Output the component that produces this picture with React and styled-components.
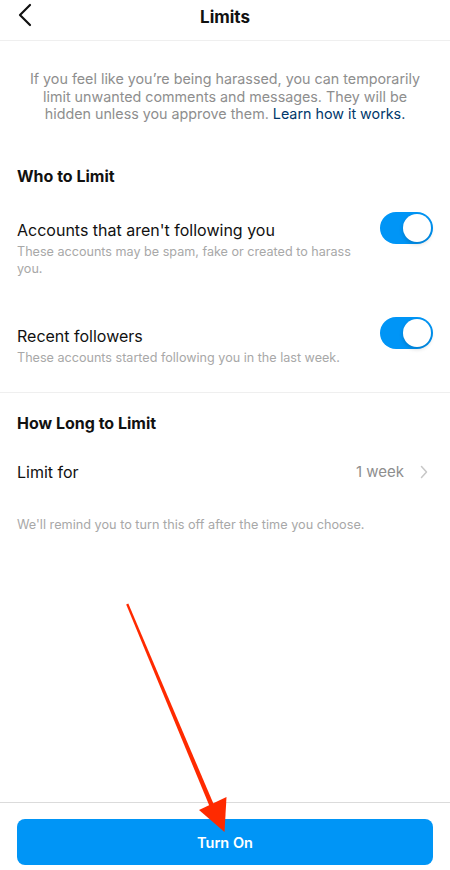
import React, { useState } from 'react';
import styled, { createGlobalStyle } from 'styled-components';

const GlobalStyle = createGlobalStyle`
  html, body {
    margin: 0;
    padding: 0;
    background: #fff;
  }
  body {
    font-family: Inter, "Noto Sans", "Liberation Sans", sans-serif;
    color: #262626;
    -webkit-font-smoothing: antialiased;
  }
`;

const Page = styled.div`
  position: relative;
  width: 450px;
  height: 870px;
  display: flex;
  flex-direction: column;
  overflow: hidden;
`;

const Header = styled.header`
  height: 40px;
  display: flex;
  align-items: center;
  justify-content: center;
  position: relative;
  border-bottom: 1px solid #efefef;
`;

const BackButton = styled.button`
  position: absolute;
  left: 12px;
  top: 2px;
  width: 26px;
  height: 26px;
  padding: 0;
  border: none;
  background: none;
  display: flex;
  align-items: center;
  justify-content: center;
`;

const Title = styled.h1`
  margin: 0;
  margin-top: -6px;
  font-size: 17px;
  font-weight: 700;
  color: #111;
`;

const Intro = styled.p`
  margin: 29px 20px 0;
  text-align: center;
  font-size: 14.3px;
  line-height: 17.5px;
  color: #8e8e8e;
`;

const LearnLink = styled.a`
  color: #00376b;
  text-decoration: none;
`;

const SectionTitle = styled.h2`
  margin: ${({ $top }) => $top}px 17px 0;
  font-size: 16px;
  font-weight: 700;
  color: #111;
`;

const Row = styled.div`
  display: flex;
  align-items: flex-start;
  justify-content: space-between;
  gap: 20px;
  margin: ${({ $top }) => $top}px 17px 0;
`;

const RowText = styled.div`
  flex: 1;
  padding-top: ${({ $pad }) => $pad || 0}px;
`;

const RowLabel = styled.div`
  font-size: 16px;
  line-height: 20px;
  color: #111;
`;

const RowHint = styled.div`
  margin-top: 3px;
  font-size: 12.6px;
  line-height: 17px;
  color: #a8a8a8;
`;

const Toggle = styled.button`
  flex: none;
  position: relative;
  width: 53px;
  height: 32px;
  padding: 0;
  border: none;
  border-radius: 16px;
  background: ${({ $on }) => ($on ? '#0095f6' : '#e5e5ea')};
  cursor: pointer;
`;

const Knob = styled.span`
  position: absolute;
  top: 2px;
  left: ${({ $on }) => ($on ? '23px' : '2px')};
  width: 28px;
  height: 28px;
  border-radius: 50%;
  background: #fff;
  box-shadow: 0 2px 4px rgba(0, 0, 0, 0.18);
`;

const Divider = styled.div`
  margin-top: ${({ $top }) => $top}px;
  height: 1px;
  background: #efefef;
`;

const PickerRow = styled.div`
  display: flex;
  align-items: center;
  justify-content: space-between;
  margin: 28px 22px 0 17px;
  height: 22px;
`;

const PickerValue = styled.div`
  display: flex;
  align-items: center;
  gap: 16px;
  font-size: 15px;
  color: #8e8e8e;
`;

const Note = styled.p`
  margin: 33px 17px 0;
  font-size: 12.7px;
  line-height: 17px;
  color: #a8a8a8;
`;

const Spacer = styled.div`
  flex: 1;
`;

const Footer = styled.footer`
  border-top: 1px solid #dbdbdb;
  padding: 16px 17px 5px;
`;

const PrimaryButton = styled.button`
  width: 100%;
  height: 46px;
  border: none;
  border-radius: 8px;
  background: #0095f6;
  color: #fff;
  font-family: inherit;
  font-size: 14.5px;
  font-weight: 600;
  cursor: pointer;
`;

const Annotation = styled.svg`
  position: absolute;
  left: 0;
  top: 0;
  pointer-events: none;
`;

function Switch({ on, onChange }) {
  return (
    <Toggle $on={on} onClick={() => onChange(!on)}>
      <Knob $on={on} />
    </Toggle>
  );
}

export default function App() {
  const [nonFollowers, setNonFollowers] = useState(true);
  const [recent, setRecent] = useState(true);

  return (
    <Page>
      <GlobalStyle />
      <Header>
        <BackButton aria-label="Back">
          <svg width="16" height="24" viewBox="0 0 16 24">
            <path d="M13 2 L3 12 L13 22" fill="none" stroke="#111" strokeWidth="2.2" strokeLinecap="round" strokeLinejoin="round" />
          </svg>
        </BackButton>
        <Title>Limits</Title>
      </Header>

      <Intro>
        If you feel like you’re being harassed, you can temporarily limit unwanted comments and
        messages. They will be hidden unless you approve them.{' '}
        <LearnLink href="#">Learn how it works.</LearnLink>
      </Intro>

      <SectionTitle $top={43}>Who to Limit</SectionTitle>

      <Row $top={26}>
        <RowText $pad={8}>
          <RowLabel>Accounts that aren't following you</RowLabel>
          <RowHint>These accounts may be spam, fake or created to harass you.</RowHint>
        </RowText>
        <Switch on={nonFollowers} onChange={setNonFollowers} />
      </Row>

      <Row $top={40}>
        <RowText $pad={9}>
          <RowLabel>Recent followers</RowLabel>
          <RowHint>These accounts started following you in the last week.</RowHint>
        </RowText>
        <Switch on={recent} onChange={setRecent} />
      </Row>

      <Divider $top={26} />

      <SectionTitle $top={20}>How Long to Limit</SectionTitle>

      <PickerRow>
        <RowLabel>Limit for</RowLabel>
        <PickerValue>
          1 week
          <svg width="8" height="14" viewBox="0 0 8 14">
            <path d="M1.5 1.5 L6.5 7 L1.5 12.5" fill="none" stroke="#c7c7c7" strokeWidth="1.5" strokeLinecap="round" strokeLinejoin="round" />
          </svg>
        </PickerValue>
      </PickerRow>

      <Note>We'll remind you to turn this off after the time you choose.</Note>

      <Spacer />

      <Footer>
        <PrimaryButton>Turn On</PrimaryButton>
      </Footer>

      {/* red pointer drawn over the page toward the button */}
      <Annotation width="450" height="870" viewBox="0 0 450 870">
        <path d="M126.2 604.4 L128.3 603.6 L215.5 808.5 L211.2 810.3 Z" fill="#ff2a00" />
        <path d="M199 810 L226.5 797 L224.5 832 Z" fill="#ff2a00" />
      </Annotation>
    </Page>
  );
}
